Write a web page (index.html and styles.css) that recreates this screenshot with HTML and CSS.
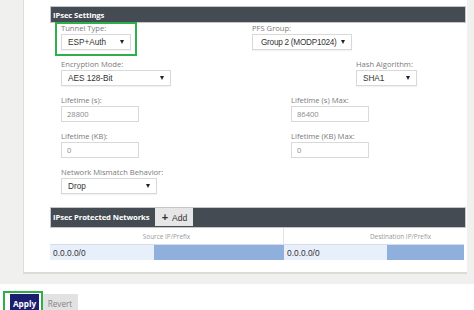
FILE: index.html
```html
<!DOCTYPE html>
<html>
<head>
<meta charset="utf-8">
<link rel="stylesheet" href="styles.css">
</head>
<body>
<div class="wrap">
  <div class="card">
    <section class="ipsec">
      <div class="bar bar-settings"><span class="bar-title">IPsec Settings</span></div>
      <div class="fields">
        <div class="row">
          <div class="field"><div class="lbl">Tunnel Type:</div><div class="select w-tunnel"><span>ESP+Auth</span><i class="caret"></i></div></div>
          <div class="field at-pfs"><div class="lbl">PFS Group:</div><div class="select w-pfs"><span>Group 2 (MODP1024)</span><i class="caret"></i></div></div>
        </div>
        <div class="row">
          <div class="field"><div class="lbl">Encryption Mode:</div><div class="select w-enc"><span>AES 128-Bit</span><i class="caret"></i></div></div>
          <div class="field at-hash"><div class="lbl">Hash Algorithm:</div><div class="select w-hash"><span>SHA1</span><i class="caret"></i></div></div>
        </div>
        <div class="row">
          <div class="field"><div class="lbl">Lifetime (s):</div><div class="input">28800</div></div>
          <div class="field at-max"><div class="lbl">Lifetime (s) Max:</div><div class="input">86400</div></div>
        </div>
        <div class="row">
          <div class="field"><div class="lbl">Lifetime (KB):</div><div class="input">0</div></div>
          <div class="field at-max"><div class="lbl">Lifetime (KB) Max:</div><div class="input">0</div></div>
        </div>
        <div class="row">
          <div class="field"><div class="lbl">Network Mismatch Behavior:</div><div class="select w-net"><span>Drop</span><i class="caret"></i></div></div>
        </div>
      </div>
      <div class="bar bar-networks">
        <span class="bar-title">IPsec Protected Networks</span>
        <button class="add"><b>+</b> Add</button>
      </div>
      <div class="net-table">
        <div class="th th-src">Source IP/Prefix</div>
        <div class="th th-dst">Destination IP/Prefix</div>
        <div class="td td-src"><span class="cell-in">0.0.0.0/0</span><span class="cell-fill"></span></div>
        <div class="td td-dst"><span class="cell-in">0.0.0.0/0</span><span class="cell-fill"></span></div>
      </div>
      <span class="highlight hl-tunnel"></span>
    </section>
  </div>
</div>
<div class="footer">
  <button class="btn apply">Apply</button>
  <button class="btn revert">Revert</button>
  <span class="highlight hl-apply"></span>
</div>
</body>
</html>
```
FILE: styles.css
```css
* { box-sizing: border-box; }
html, body { margin: 0; padding: 0; }
body {
  width: 474px;
  height: 310px;
  overflow: hidden;
  background: #ffffff;
  font-family: "Open Sans", "Liberation Sans", sans-serif;
}
.wrap {
  background: #f0f0ee;
  padding: 0 7px 10px 23px;
}
.card {
  background: #ffffff;
  border-left: 1px solid #dedede;
  border-bottom: 2px solid #dadad6;
  padding: 6px 1px 12px 26px;
}
.ipsec { position: relative; }
.bar {
  background: #454b53;
  border: 1px solid #c4c6c8;
  display: flex;
  align-items: center;
  color: #ffffff;
}
.bar-settings { height: 17px; }
.bar-title {
  font-weight: 700;
  font-size: 7.7px;
  padding-left: 2px;
  letter-spacing: -0.1px;
}
.bar-networks {
  height: 21px;
  align-items: flex-start;
}
.bar-networks .bar-title { line-height: 19px; }
.add {
  margin-left: 6px;
  height: 18px;
  width: 38px;
  border: 0;
  background: #e6e6e6;
  color: #333;
  font-family: "Liberation Sans", sans-serif;
  font-size: 8.5px;
  padding: 0;
}
.add b { font-size: 11px; font-weight: 700; margin-right: 2px; }
.fields { padding: 0 0 4px 11px; }
.row { display: flex; margin-bottom: 9px; }
.field { display: flex; flex-direction: column; }
.lbl {
  height: 11px;
  line-height: 11px;
  font-size: 7.6px;
  color: #7a7a7a;
  white-space: nowrap;
}
.at-pfs { margin-left: 121px; }
.at-hash { margin-left: 185px; }
.at-max { margin-left: 152px; }
.select, .input {
  height: 16px;
  border: 1px solid #d9d9d9;
  background: #fff;
  display: flex;
  align-items: center;
}
.select {
  padding: 0 6px 0 6px;
  font-family: "Liberation Sans", sans-serif;
  font-size: 8.2px;
  color: #333;
  white-space: nowrap;
  box-shadow: 0 1px 1px rgba(0,0,0,0.05);
}
.caret {
  margin-left: auto;
  flex: none;
  width: 0; height: 0;
  border-left: 2.5px solid transparent;
  border-right: 2.5px solid transparent;
  border-top: 4px solid #222;
}
.w-tunnel { width: 70px; }
.w-pfs { width: 100px; padding-left: 8px; letter-spacing: -0.25px; }
.w-enc { width: 110px; }
.w-hash { width: 61px; }
.w-net { width: 96px; }
.input {
  width: 78px;
  padding-left: 5px;
  font-size: 7.6px;
  color: #8a8a8a;
}
.net-table {
  display: grid;
  grid-template-columns: 234px 180px;
  grid-template-rows: 16px 16px;
}
.th {
  font-size: 6.4px;
  color: #999;
  display: flex;
  align-items: center;
}
.th-src { justify-content: center; border-right: 1px solid #e4e4e4; }
.th-dst { justify-content: flex-end; padding-right: 33px; }
.td {
  display: flex;
  border-top: 1px solid #d6dde8;
}
.cell-in {
  background: #e7effb;
  font-family: "Liberation Sans", sans-serif;
  font-size: 8.4px;
  color: #333;
  display: flex;
  align-items: center;
  padding-left: 3px;
}
.td-src .cell-in { width: 104px; }
.td-dst .cell-in { width: 103px; }
.cell-fill { flex: 1; background: #8fafdc; }
.footer {
  position: relative;
  padding: 10px 0 0 10px;
  display: flex;
  gap: 3px;
}
.btn {
  border: 0;
  height: 18px;
  padding: 0;
  font-size: 8.2px;
}
.apply {
  width: 29px;
  background: #1b1f6e;
  color: #fff;
  font-weight: 700;
  font-family: "Open Sans", sans-serif;
}
.revert {
  width: 36px;
  background: #e2e2e2;
  color: #858585;
  font-family: "Open Sans", sans-serif;
}
.highlight {
  position: absolute;
  border: 2px solid #2eaf4b;
}
.hl-tunnel { left: 5px; top: 16px; width: 82px; height: 34px; }
.hl-apply { left: 3px; top: 7px; width: 40px; height: 24px; }
```
